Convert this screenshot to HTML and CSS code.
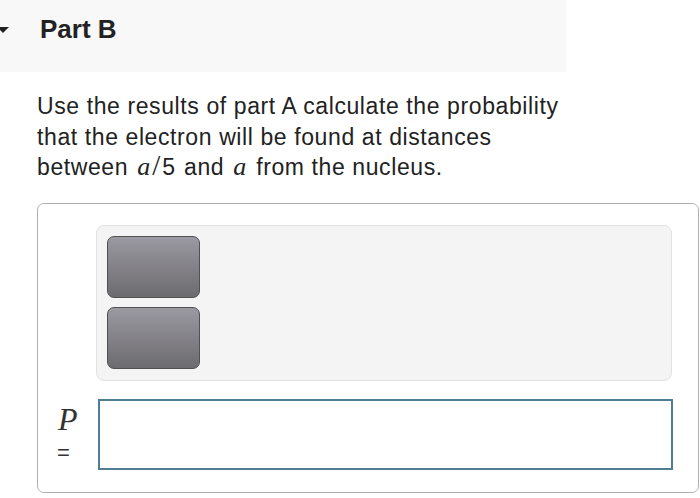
FILE: index.html
```html
<!DOCTYPE html>
<html>
<head>
<meta charset="utf-8">
<link rel="stylesheet" href="styles.css">
</head>
<body>
<div class="part-header">
  <span class="caret"></span>
  <h2 class="part-title">Part B</h2>
</div>
<p class="question">Use the results of part A calculate the probability that the electron will be found at distances between <span class="math"><i>a</i><span class="slash">/</span>5</span> and <span class="math"><i>a</i></span> from the nucleus.</p>
<div class="answer-box">
  <div class="toolbar">
    <div class="tool-btn"></div>
    <div class="tool-btn"></div>
  </div>
  <div class="answer-row">
    <div class="label"><span class="var">P</span><span class="eq">=</span></div>
    <div class="input"></div>
  </div>
</div>
</body>
</html>
```

FILE: styles.css
```css
html, body {
  margin: 0;
  padding: 0;
  background: #ffffff;
  font-family: "Liberation Sans", Arial, sans-serif;
  color: #222;
}
.part-header {
  width: 566px;
  height: 72px;
  background: #f8f8f8;
  display: flex;
  align-items: center;
  position: relative;
}
.caret {
  position: absolute;
  left: -3px;
  top: 27px;
  width: 0;
  height: 0;
  border-left: 6px solid transparent;
  border-right: 6px solid transparent;
  border-top: 6px solid #222;
}
.part-title {
  margin: 0 0 0 40px;
  font-size: 26px;
  font-weight: bold;
  color: #222;
  line-height: 1;
  position: relative;
  top: -7px;
}
.question {
  margin: 19px 0 0 37px;
  width: 540px;
  font-size: 23px;
  letter-spacing: 0.6px;
  line-height: 30.5px;
  color: #222;
}
.math {
  font-family: "Liberation Sans", Arial, sans-serif;
  font-size: 23px;
  line-height: 0;
  letter-spacing: 0;
  margin: 0 2px;
}
.math i {
  font-family: "Liberation Serif", serif;
  font-size: 26px;
  margin-right: 1px;
}
.slash {
  font-family: "Liberation Serif", serif;
  font-size: 29px;
  margin: 0 2px 0 1px;
}
.answer-box {
  margin: 20px 0 0 37px;
  width: 660px;
  height: 288px;
  border: 1.5px solid #b0b0b0;
  border-radius: 7px;
  display: flex;
  flex-direction: column;
}
.toolbar {
  margin: 21px 26px 0 58px;
  height: 134px;
  background: #f4f4f4;
  border: 1px solid #e2e2e2;
  border-radius: 8px;
  padding: 10px;
  display: flex;
  flex-direction: column;
  gap: 9px;
}
.tool-btn {
  width: 91px;
  height: 60px;
  border: 1px solid #505050;
  border-radius: 7px;
  background: linear-gradient(#9b99a1, #6c6b6f);
}
.answer-row {
  display: flex;
  margin-top: 18px;
  align-items: stretch;
}
.label {
  width: 60px;
  display: flex;
  flex-direction: column;
  align-items: flex-start;
  justify-content: space-between;
  padding-left: 19px;
  box-sizing: border-box;
}
.var {
  font-family: "Liberation Serif", serif;
  font-style: italic;
  font-size: 32px;
  color: #333;
  line-height: 28px;
  margin: 6px 0 0 1px;
}
.eq {
  font-size: 22px;
  color: #333;
  line-height: 22px;
  margin-bottom: 6px;
}
.input {
  width: 571px;
  height: 67px;
  border: 2px solid #4f7e94;
}
```
